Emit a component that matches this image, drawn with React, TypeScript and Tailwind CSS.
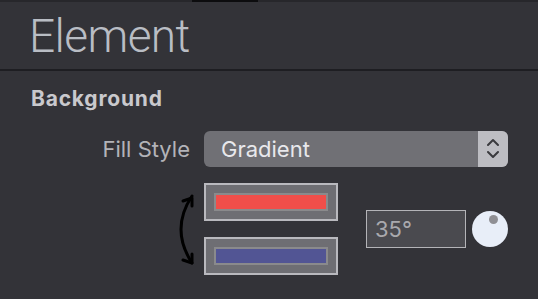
// swatch with light frame + inner colour bar
function Swatch({ color }: { color: string }) {
  return (
    <div className="w-[134px] h-[38px] border-2 border-[#b9b9be] bg-[#6e6e73] flex items-center justify-center">
      <div className={`w-[114px] h-[18px] border-2 border-[#8a8a8c] ${color}`} />
    </div>
  );
}

export default function App() {
  return (
    <div
      className="w-[538px] h-[299px] bg-[#333338] overflow-hidden flex flex-col"
      style={{ fontFamily: "Inter, 'Liberation Sans', sans-serif" }}
    >
      {/* top edge */}
      <div className="h-[2px] bg-[#27272b] flex">
        <div className="ml-[192px] w-[66px] bg-[#0c0c0e]" />
      </div>

      {/* Header */}
      <div className="h-[67px] flex items-center pl-[29px]">
        <span
          className="text-[46px] font-light text-[#b9bdc4] tracking-[-0.6px] leading-none"
          style={{ fontFamily: "Roboto, 'Liberation Sans', sans-serif" }}
        >
          Element
        </span>
      </div>
      <div className="h-[2px] bg-[#1e1e22]" />

      {/* Section */}
      <div className="pt-[15px] pl-[31px]">
        <h3 className="text-[21px] font-bold leading-[26px] tracking-[0.8px] text-[#c9c9cd]">
          Background
        </h3>
      </div>

      {/* Fill Style row */}
      <div className="mt-[19px] flex items-center">
        <span className="w-[190px] text-right text-[22px] text-[#b3b3b8]">
          Fill Style
        </span>
        <div className="ml-[14px] w-[304px] h-[36px] rounded-[6px] bg-[#707075] flex overflow-hidden">
          <span className="flex-1 flex items-center pl-[17px] text-[22px] text-[#e8e8ec]">
            Gradient
          </span>
          <div className="w-[30px] bg-[#bdbdc2] flex items-center justify-center">
            <svg width="12" height="22" viewBox="0 0 12 22" fill="none" stroke="#3a3a3e" strokeWidth="2" strokeLinecap="round" strokeLinejoin="round">
              <path d="M1 7 L6 2 L11 7" />
              <path d="M1 14 L6 19 L11 14" />
            </svg>
          </div>
        </div>
      </div>

      {/* Gradient stops */}
      <div className="mt-[16px] flex items-center">
        <svg width="34" height="92" viewBox="0 0 34 92" className="ml-[170px]">
          <path
            d="M22 13 Q0 46 22 80"
            fill="none"
            stroke="#000"
            strokeWidth="3"
            strokeLinecap="round"
          />
          <path
            d="M13 18 L22 15 L22 23"
            fill="none"
            stroke="#000"
            strokeWidth="3"
            strokeLinecap="round"
            strokeLinejoin="round"
          />
          <path
            d="M13 77 L22 80 L22 71"
            fill="none"
            stroke="#000"
            strokeWidth="3"
            strokeLinecap="round"
            strokeLinejoin="round"
          />
        </svg>
        <div className="flex flex-col gap-[16px]">
          <Swatch color="bg-[#f04e4a]" />
          <Swatch color="bg-[#525594]" />
        </div>
        <div className="ml-[28px] w-[100px] h-[38px] border border-[#b4b4b8] bg-[#4a4a4f] flex items-center pl-[8px] text-[22px] text-[#a9a9ad]">
          35°
        </div>
        <div className="ml-[6px] w-[36px] h-[36px] rounded-full bg-[#e8eef8] relative">
          <div className="absolute left-[17px] top-[4px] w-[9px] h-[9px] rounded-full bg-[#8f8f94]" />
        </div>
      </div>
    </div>
  );
}
